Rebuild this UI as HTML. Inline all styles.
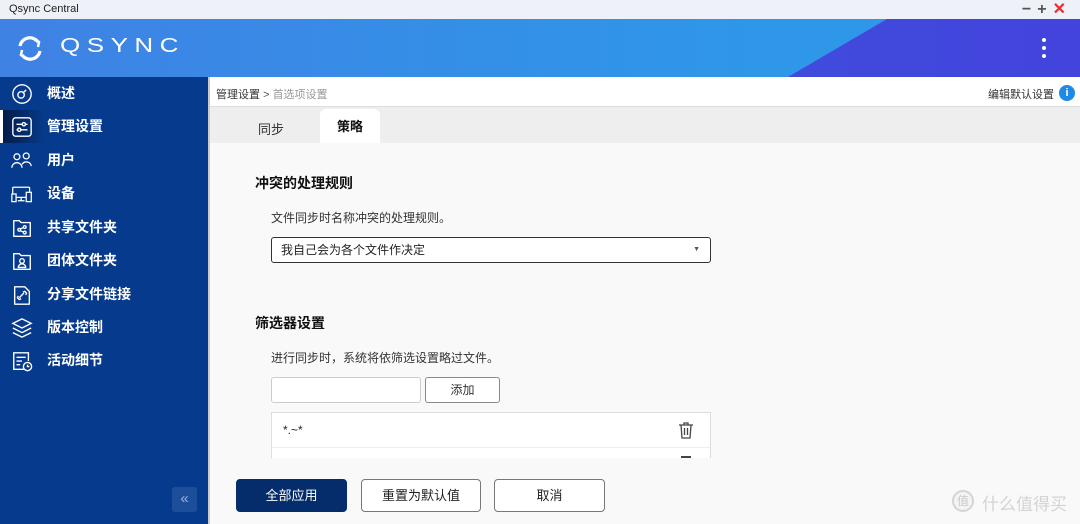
<!DOCTYPE html>
<html><head><meta charset="utf-8"><style>
*{margin:0;padding:0;box-sizing:border-box}
body{width:1080px;height:524px;overflow:hidden;position:relative;background:#f9f9f9;font-family:"Liberation Sans","Noto Sans CJK SC",sans-serif;}
.abs{position:absolute}
#title{left:0;top:0;width:1080px;height:19px;background:#eef1f7;font-size:11px;color:#222;line-height:19px;padding-left:9px}
#hdr{left:0;top:19px;width:1080px;height:58px;background:linear-gradient(90deg,#3f82e4,#2e97e8 70%);overflow:hidden}
#hdr .dia{position:absolute;left:0;top:0;width:1080px;height:58px;background:linear-gradient(90deg,#3b5ddc,#4244dc);clip-path:polygon(887px 0,1080px 0,1080px 58px,788px 58px)}
#side{left:0;top:77px;width:208px;height:447px;background:#063a8c}
.it{position:absolute;left:0;width:208px;height:33px;color:#fff;font-size:14px;font-weight:bold;line-height:33px;padding-left:47px}
.it svg{position:absolute;left:11px;top:6px;width:22px;height:22px}
.btn{position:absolute;height:33px;border:1px solid #777;border-radius:4px;background:#fff;font-size:13px;color:#222;text-align:center;line-height:31px}
</style></head><body>
<div id="title" class="abs">Qsync Central</div>
<div class="abs" style="right:8px;top:1px;font-size:16px;line-height:17px;font-weight:bold;color:#555;letter-spacing:6px">−+<span style="color:#e53030">✕</span></div>
<div id="hdr" class="abs"><div class="dia"></div>
<svg class="abs" style="left:16px;top:16px" width="28" height="27" viewBox="0 0 28 27" fill="none" stroke="#fff" stroke-width="3.2"><path d="M4 11A10 10 0 0 1 22 7"/><path d="M24 16A10 10 0 0 1 6 20"/><path d="M18 4l5 3-1 5" stroke-width="2.5"/><path d="M10 23l-5-3 1-5" stroke-width="2.5"/></svg>
<div class="abs" style="left:60px;top:16px;color:#fff;font-size:20px;letter-spacing:5px;transform:scaleX(1.3);transform-origin:left">QSYNC</div>
<div class="abs" style="left:1042px;top:19px;width:4px;height:4px;border-radius:2px;background:#fff;box-shadow:0 8px 0 #fff,0 16px 0 #fff"></div>
</div>
<div id="side" class="abs">
<div class="abs" style="left:0;top:33px;width:45px;height:33px;background:linear-gradient(90deg,#021a44,#063a8c)"></div>
<div class="abs" style="left:0;top:33px;width:3px;height:33px;background:#fff"></div>
</div>
<div class="it" style="top:77px"><svg viewBox="0 0 24 24" fill="none" stroke="#fff" stroke-width="1.5"><circle cx="12" cy="12" r="10"/><circle cx="11" cy="13" r="3.5"/><path d="M13.5 10.5l3-3"/></svg>概述</div>
<div class="it" style="top:110px"><svg viewBox="0 0 24 24" fill="none" stroke="#fff" stroke-width="1.5"><rect x="2" y="2" width="20" height="20" rx="3"/><path d="M6 9h12M6 15h12"/><circle cx="14" cy="9" r="1.8" fill="#063a8c"/><circle cx="9" cy="15" r="1.8" fill="#063a8c"/></svg>管理设置</div>
<div class="it" style="top:144px"><svg viewBox="0 0 26 24" fill="none" stroke="#fff" stroke-width="1.5"><circle cx="7" cy="7" r="3.5"/><circle cx="18" cy="6" r="3.5"/><path d="M1 20a6 6 0 0 1 12 0M13 16a6 6 0 0 1 11 2"/></svg>用户</div>
<div class="it" style="top:177px"><svg viewBox="0 0 26 24" fill="none" stroke="#fff" stroke-width="1.5"><rect x="2" y="4" width="20" height="12" rx="1"/><path d="M8 20h8M12 16v4"/><rect x="1" y="12" width="5" height="9" fill="#063a8c"/><rect x="18" y="10" width="6" height="11" fill="#063a8c"/></svg>设备</div>
<div class="it" style="top:211px"><svg viewBox="0 0 24 24" fill="none" stroke="#fff" stroke-width="1.5"><path d="M3 4h6l2 2h10v15H3z" stroke-linejoin="round"/><circle cx="9" cy="14" r="1.5"/><circle cx="15" cy="11" r="1.5"/><circle cx="15" cy="17" r="1.5"/><path d="M10 13l4-1.5M10 15l4 1.5"/></svg>共享文件夹</div>
<div class="it" style="top:244px"><svg viewBox="0 0 24 24" fill="none" stroke="#fff" stroke-width="1.5"><path d="M3 4h6l2 2h10v15H3z" stroke-linejoin="round"/><circle cx="12" cy="12" r="2.5"/><path d="M8 19a4 4 0 0 1 8 0z"/></svg>团体文件夹</div>
<div class="it" style="top:278px"><svg viewBox="0 0 24 24" fill="none" stroke="#fff" stroke-width="1.5"><path d="M4 3h11l5 5v14H4z" stroke-linejoin="round"/><path d="M9 15l5-5M8 13l-1 2 2 2 2-1M16 12l1-2-2-2-2 1"/></svg>分享文件链接</div>
<div class="it" style="top:311px"><svg viewBox="0 0 24 24" fill="none" stroke="#fff" stroke-width="1.5"><path d="M12 2l10 5-10 5L2 7z"/><path d="M2 12l10 5 10-5M2 17l10 5 10-5"/></svg>版本控制</div>
<div class="it" style="top:344px"><svg viewBox="0 0 24 24" fill="none" stroke="#fff" stroke-width="1.5"><path d="M14 21H3V3h16v9"/><path d="M6 8h10M6 12h6M6 16h4"/><circle cx="18" cy="18" r="4.5"/><path d="M18 16v2h2"/></svg>活动细节</div>
<div class="abs" style="left:172px;top:487px;width:25px;height:25px;border-radius:3px;background:#1d4e99;color:#9db3da;font-size:15px;text-align:center;line-height:24px">«</div>
<div class="abs" style="left:208px;top:77px;width:2px;height:447px;background:#ccc"></div>
<div class="abs" style="left:210px;top:77px;width:870px;height:30px;background:#fff;border-bottom:1px solid #ddd"></div>
<div class="abs" style="left:216px;top:86px;font-size:11px;color:#333">管理设置 <span style="color:#555">&gt;</span> <span style="color:#999">首选项设置</span></div>
<div class="abs" style="left:988px;top:86px;font-size:11px;color:#333">编辑默认设置</div>
<div class="abs" style="left:1059px;top:85px;width:16px;height:16px;border-radius:8px;background:#1e8ae6;color:#fff;font-size:11px;font-weight:bold;text-align:center;line-height:16px">i</div>
<div class="abs" style="left:210px;top:107px;width:870px;height:36px;background:#eeeeee"></div>
<div class="abs" style="left:258px;top:119px;font-size:13px;color:#333">同步</div>
<div class="abs" style="left:320px;top:109px;width:60px;height:34px;background:#fff;border-radius:6px 6px 0 0;font-size:13px;font-weight:bold;color:#111;text-align:center;line-height:36px">策略</div>
<div class="abs" style="left:210px;top:143px;width:870px;height:315px;background:#f9f9f9"></div>
<div class="abs" style="left:255px;top:173px;font-size:14px;font-weight:bold;color:#111">冲突的处理规则</div>
<div class="abs" style="left:271px;top:209px;font-size:12px;color:#333">文件同步时名称冲突的处理规则。</div>
<div class="abs" style="left:271px;top:237px;width:440px;height:26px;border:1px solid #333;border-radius:3px;background:#fff;font-size:12px;color:#222;line-height:24px;padding-left:9px">我自己会为各个文件作决定<span style="position:absolute;right:10px;top:0;font-size:7px;color:#555">▼</span></div>
<div class="abs" style="left:255px;top:313px;font-size:14px;font-weight:bold;color:#111">筛选器设置</div>
<div class="abs" style="left:271px;top:349px;font-size:12px;color:#333">进行同步时，系统将依筛选设置略过文件。</div>
<div class="abs" style="left:271px;top:377px;width:150px;height:26px;border:1px solid #ccc;border-radius:3px;background:#fff"></div>
<div class="abs" style="left:425px;top:377px;width:75px;height:26px;border:1px solid #888;border-radius:3px;background:#fff;font-size:12px;text-align:center;line-height:24px;color:#333">添加</div>
<div class="abs" style="left:271px;top:412px;width:440px;height:46px;border:1px solid #ddd;border-bottom:none;background:#fff;overflow:hidden">
<div style="height:35px;border-bottom:1px solid #eee;font-size:12px;line-height:35px;padding-left:11px;color:#222">*.~*</div>
<svg class="abs" style="left:406px;top:8px" width="16" height="18" fill="none" stroke="#444" stroke-width="1.3"><path d="M1 4h14M6 4V2h4v2M3 4l1 13h8l1-13M6.5 7v7M9.5 7v7"/></svg>
<div class="abs" style="left:409px;top:43px;width:10px;height:2px;background:#444"></div>
</div>
<div class="btn" style="left:236px;top:479px;width:111px;background:#052c6b;border-color:#052c6b;color:#fff">全部应用</div>
<div class="btn" style="left:361px;top:479px;width:120px">重置为默认值</div>
<div class="btn" style="left:494px;top:479px;width:111px">取消</div>
<div class="abs" style="left:952px;top:490px;width:22px;height:22px;border-radius:11px;border:2px solid #d4d4d4;color:#c8c8c8;font-size:12px;text-align:center;line-height:18px;background:#f4f4f4">值</div>
<div class="abs" style="left:982px;top:490px;font-size:17px;color:#d4d4d4">什么值得买</div>
</body></html>
